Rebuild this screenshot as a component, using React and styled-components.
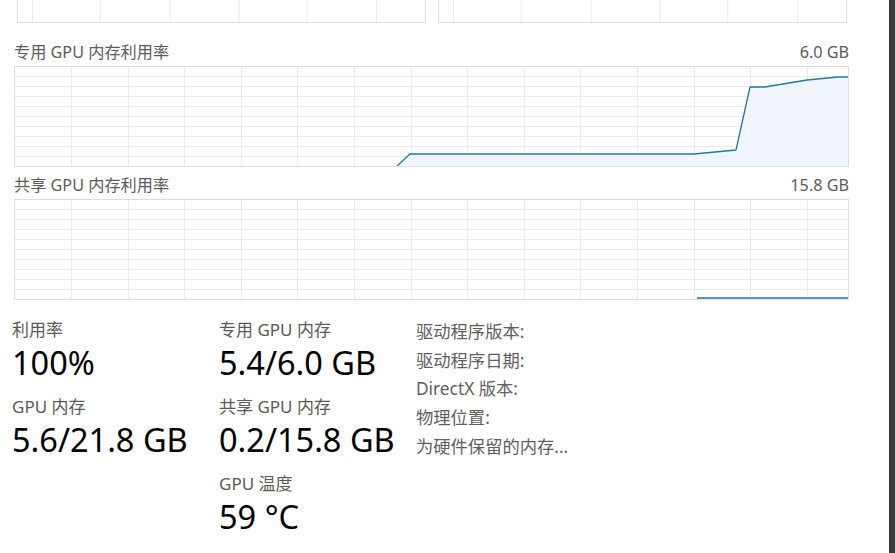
import React from "react";
import styled, { createGlobalStyle } from "styled-components";

const Global = createGlobalStyle`
  html, body { margin: 0; padding: 0; background: #ffffff; }
  body { font-family: "Noto Sans", "Noto Sans CJK SC", sans-serif; overflow: hidden; }
`;

const Page = styled.div`
  display: flex;
  width: 895px;
  height: 553px;
  overflow: hidden;
`;

const Content = styled.div`
  flex: 1;
  display: flex;
  flex-direction: column;
  padding: 0 40px 0 14px;
  background: #ffffff;
`;

const ScrollTrack = styled.div`
  width: 6px;
  background: #3b3b3b;
`;

const MiniRow = styled.div`
  display: flex;
  gap: 12px;
  margin-left: 3px;
  margin-right: 2px;
  height: 23px;
`;

const MiniFrame = styled.div`
  flex: 1;
  box-sizing: border-box;
  border: 1px solid #dedede;
  border-top: none;
  overflow: hidden;
`;

const ChartHeader = styled.div`
  display: flex;
  justify-content: space-between;
  align-items: center;
  height: 20px;
  margin-top: ${(p) => p.$top}px;
  margin-bottom: 4px;
  font-size: 16.2px;
  line-height: 20px;
  color: #5c5c5c;
`;

const ChartFrame = styled.div`
  box-sizing: border-box;
  height: 101px;
  border: 1px solid #dedede;
  background: #ffffff;
  svg { display: block; width: 100%; height: 100%; }
`;

const Stats = styled.div`
  display: grid;
  grid-template-columns: 207px 197px 1fr;
  padding-top: 18px;
  margin-left: -2px;
`;

const StatColumn = styled.div`
  display: flex;
  flex-direction: column;
  gap: 10px;
`;

const Stat = styled.div`
  display: flex;
  flex-direction: column;
`;

const StatLabel = styled.div`
  font-size: 17px;
  line-height: 23px;
  color: #5a5a5a;
  white-space: nowrap;
`;

const StatValue = styled.div`
  font-size: 32.5px;
  line-height: 44px;
  color: #000000;
  white-space: nowrap;
`;

const InfoList = styled.div`
  display: flex;
  flex-direction: column;
`;

const InfoLine = styled.div`
  font-size: 17.3px;
  line-height: 28.7px;
  color: #5f5f5f;
  white-space: nowrap;
`;

const GRID = "#ebebeb";
const LINE = "#1f79a6";
const FILL = "#eff5fb";

function MiniChart() {
  const xs = [14, 82, 152, 221, 289, 359];
  return (
    <MiniFrame>
      <svg width="100%" height="22" viewBox="0 0 408 22" preserveAspectRatio="none" style={{ display: "block" }}>
        {xs.map((x) => (
          <line key={x} x1={x + 0.5} y1="0" x2={x + 0.5} y2="22" stroke={GRID} strokeWidth="1" />
        ))}
      </svg>
    </MiniFrame>
  );
}

function BigChart({ points }) {
  const W = 833;
  const H = 99;
  const vx = Array.from({ length: 14 }, (_, i) => Math.round(56 + i * 56.6));
  const hy = Array.from({ length: 9 }, (_, i) => 9 + i * 10);
  const pts = points.map((p) => p.join(",")).join(" ");
  const first = points[0];
  const last = points[points.length - 1];
  const area = `${first[0]},${H} ${pts} ${last[0]},${H}`;
  return (
    <ChartFrame>
      <svg viewBox={`0 0 ${W} ${H}`} preserveAspectRatio="none">
        {hy.map((y) => (
          <line key={"h" + y} x1="0" y1={y + 0.5} x2={W} y2={y + 0.5} stroke={GRID} strokeWidth="1" />
        ))}
        {vx.map((x) => (
          <line key={"v" + x} x1={x + 0.5} y1="0" x2={x + 0.5} y2={H} stroke={GRID} strokeWidth="1" />
        ))}
        <polygon points={area} fill={FILL} fillOpacity="0.85" />
        <polyline points={pts} fill="none" stroke={LINE} strokeWidth="1.3" strokeLinejoin="round" />
      </svg>
    </ChartFrame>
  );
}

const dedicated = [
  [382, 99],
  [395, 87],
  [679, 87],
  [721, 83],
  [735, 20],
  [750, 20],
  [792, 13],
  [823, 10],
  [833, 10],
];

const shared = [
  [682, 98],
  [833, 98],
];

export default function App() {
  return (
    <>
      <Global />
      <Page>
        <Content>
          <MiniRow>
            <MiniChart />
            <MiniChart />
          </MiniRow>

          <ChartHeader $top={19}>
            <span>专用 GPU 内存利用率</span>
            <span>6.0 GB</span>
          </ChartHeader>
          <BigChart points={dedicated} />

          <ChartHeader $top={8}>
            <span>共享 GPU 内存利用率</span>
            <span>15.8 GB</span>
          </ChartHeader>
          <BigChart points={shared} />

          <Stats>
            <StatColumn>
              <Stat>
                <StatLabel>利用率</StatLabel>
                <StatValue>100%</StatValue>
              </Stat>
              <Stat>
                <StatLabel>GPU 内存</StatLabel>
                <StatValue>5.6/21.8 GB</StatValue>
              </Stat>
            </StatColumn>
            <StatColumn>
              <Stat>
                <StatLabel>专用 GPU 内存</StatLabel>
                <StatValue>5.4/6.0 GB</StatValue>
              </Stat>
              <Stat>
                <StatLabel>共享 GPU 内存</StatLabel>
                <StatValue>0.2/15.8 GB</StatValue>
              </Stat>
              <Stat>
                <StatLabel>GPU 温度</StatLabel>
                <StatValue>59 °C</StatValue>
              </Stat>
            </StatColumn>
            <InfoList>
              <InfoLine>驱动程序版本:</InfoLine>
              <InfoLine>驱动程序日期:</InfoLine>
              <InfoLine>DirectX 版本:</InfoLine>
              <InfoLine>物理位置:</InfoLine>
              <InfoLine>为硬件保留的内存...</InfoLine>
            </InfoList>
          </Stats>
        </Content>
        <ScrollTrack />
      </Page>
    </>
  );
}
